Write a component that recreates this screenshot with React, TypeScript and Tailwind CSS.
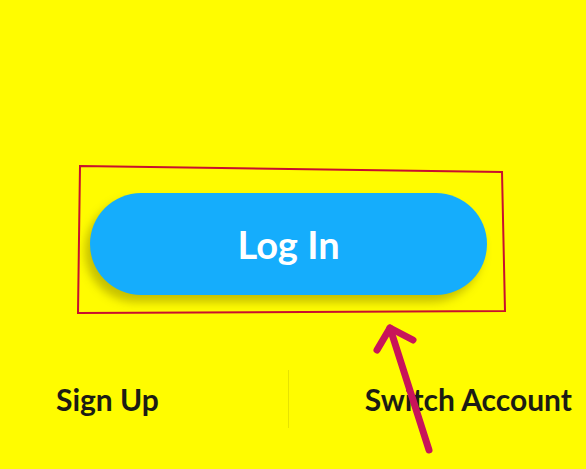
export default function App() {
  return (
    <div className="relative w-[586px] h-[469px] overflow-hidden bg-[#fffc00] font-['Lato','Open_Sans',sans-serif]">
      <div className="flex flex-col pt-[193px]">
        <button className="ml-[90px] w-[397px] h-[102px] rounded-full bg-[#15adfc] text-white text-[38px] font-bold shadow-[-5px_7px_10px_rgba(90,80,0,0.35)]">
          Log In
        </button>

        {/* bottom links */}
        <div className="mt-[75px] grid grid-cols-[288px_1px_1fr] items-center">
          <div className="pl-[56px] text-[30px] font-bold text-[#1c1c14]">Sign Up</div>
          <div className="h-[58px] bg-[#e6e300]" />
          <div className="pr-[14px] text-right text-[30px] font-bold text-[#1c1c14]">Switch Account</div>
        </div>
      </div>

      {/* hand drawn annotation */}
      <svg className="absolute inset-0 pointer-events-none" width="586" height="469" viewBox="0 0 586 469">
        <path d="M80 166 L502 172 L505 311 L78 313 Z" fill="none" stroke="#c8102e" strokeWidth="2" />
        <g stroke="#c8145a" strokeWidth="7" strokeLinecap="round" strokeLinejoin="round" fill="none">
          <path d="M429 450 L390 328" />
          <path d="M377 350 L390 328 L413 340" />
        </g>
      </svg>
    </div>
  );
}
